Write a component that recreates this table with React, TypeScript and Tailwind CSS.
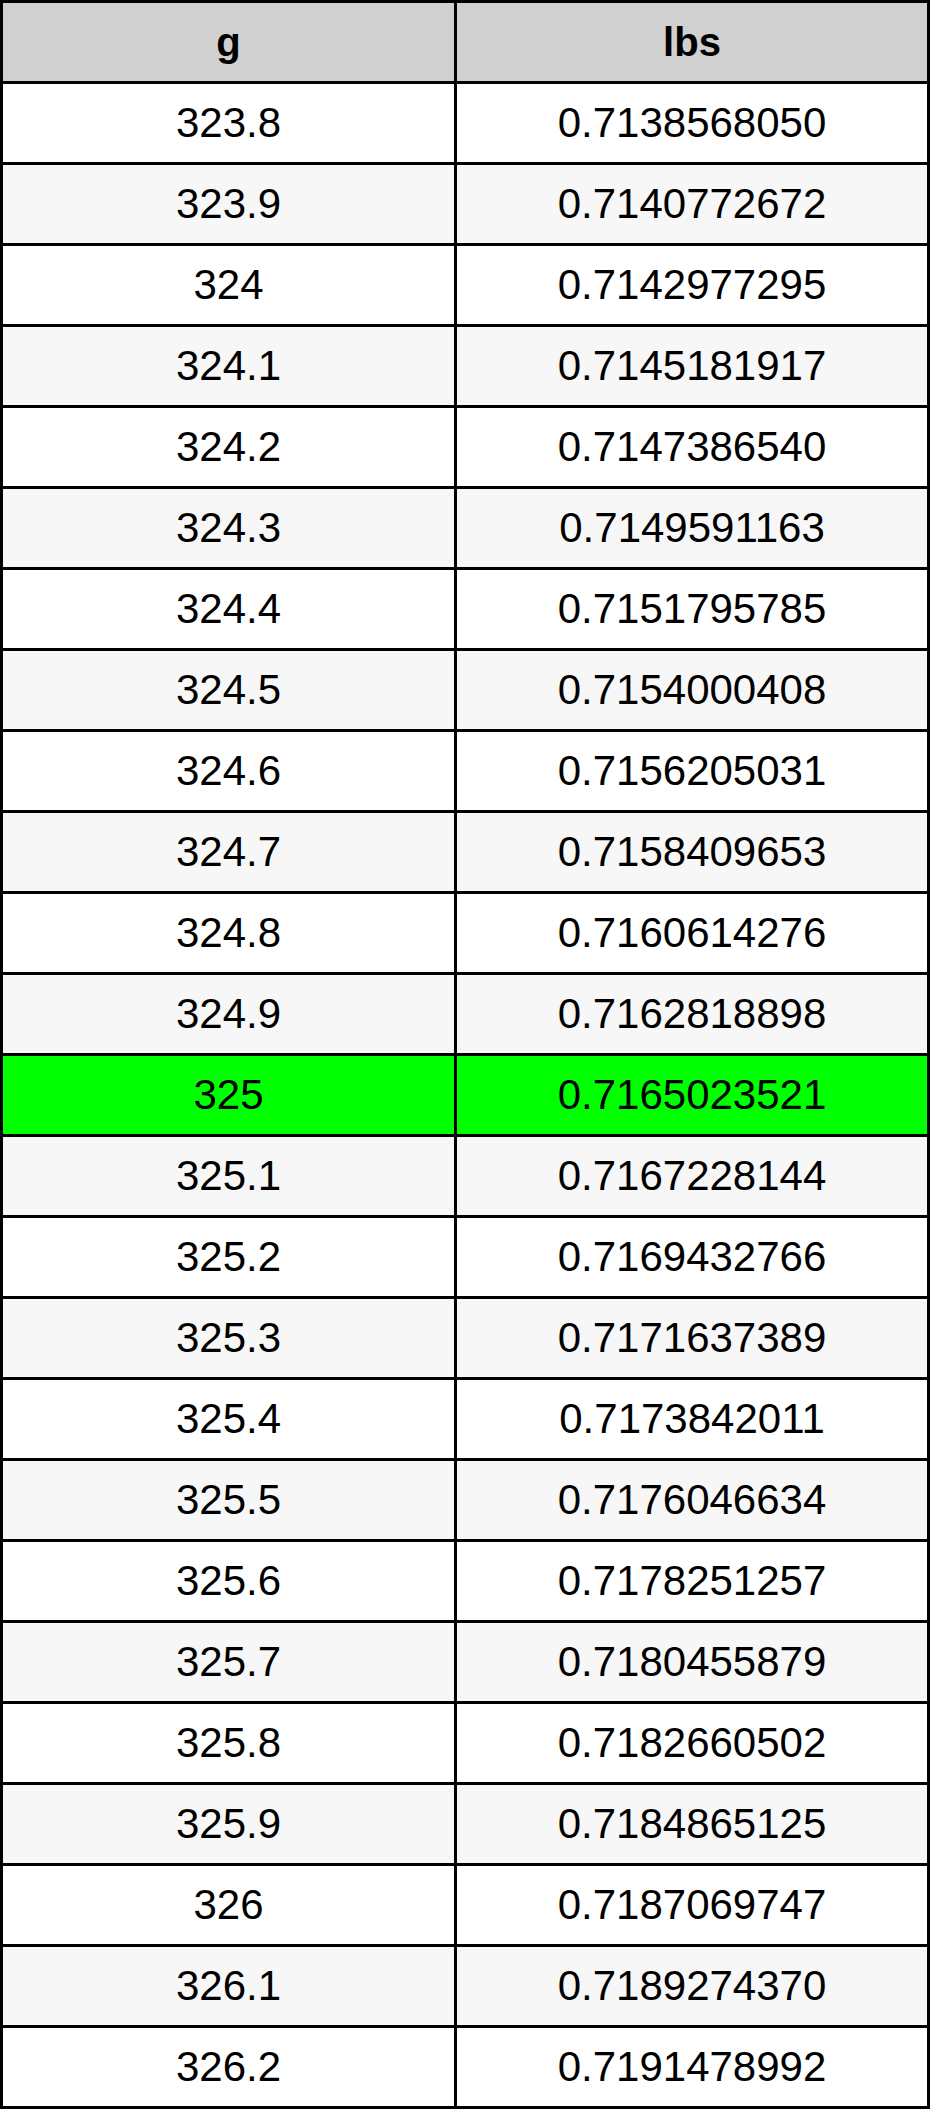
const rows: [string, string][] = [
  ['323.8', '0.7138568050'],
  ['323.9', '0.7140772672'],
  ['324', '0.7142977295'],
  ['324.1', '0.7145181917'],
  ['324.2', '0.7147386540'],
  ['324.3', '0.7149591163'],
  ['324.4', '0.7151795785'],
  ['324.5', '0.7154000408'],
  ['324.6', '0.7156205031'],
  ['324.7', '0.7158409653'],
  ['324.8', '0.7160614276'],
  ['324.9', '0.7162818898'],
  ['325', '0.7165023521'],
  ['325.1', '0.7167228144'],
  ['325.2', '0.7169432766'],
  ['325.3', '0.7171637389'],
  ['325.4', '0.7173842011'],
  ['325.5', '0.7176046634'],
  ['325.6', '0.7178251257'],
  ['325.7', '0.7180455879'],
  ['325.8', '0.7182660502'],
  ['325.9', '0.7184865125'],
  ['326', '0.7187069747'],
  ['326.1', '0.7189274370'],
  ['326.2', '0.7191478992'],
];

export default function App() {
  return (
    <div className="bg-white font-['Liberation_Sans',Arial,sans-serif] text-black">
      <table className="w-[930px] table-fixed border-separate border-spacing-[3px] bg-black leading-none">
        <thead>
          <tr>
            <th className="h-[78px] w-[451px] p-0 bg-[#d0d0d0] text-center align-middle text-[40px] font-bold">g</th>
            <th className="h-[78px] w-[470px] p-0 bg-[#d0d0d0] text-center align-middle text-[40px] font-bold">lbs</th>
          </tr>
        </thead>
        <tbody className="text-[42px]">
          {rows.map(([g, lbs], i) => {
            // highlighted value, otherwise zebra striping
            const bg = g === '325' ? 'bg-[#00ff00]' : i % 2 === 1 ? 'bg-[#f7f7f7]' : 'bg-white';
            return (
              <tr key={g}>
                <td className={`h-[78px] p-0 text-center align-middle ${bg}`}>{g}</td>
                <td className={`h-[78px] p-0 text-center align-middle ${bg}`}>{lbs}</td>
              </tr>
            );
          })}
        </tbody>
      </table>
    </div>
  );
}
